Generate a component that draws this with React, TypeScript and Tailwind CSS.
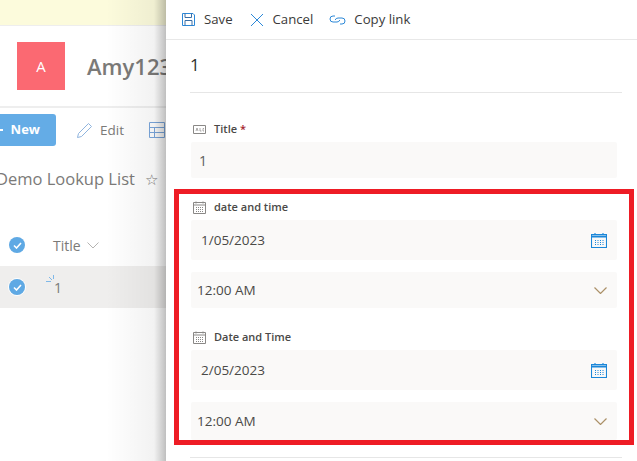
const font = "font-['Open_Sans',sans-serif]";

const SaveIcon = () => (
  <svg width="15" height="15" viewBox="0 0 15 15" fill="none" stroke="#2b88d8" strokeWidth="1">
    <path d="M1.500 1.500h10.500l1.500 1.500v10.500h-12z" />
    <path d="M4 1.500v4h6.500v-4M4 13.500v-5h7v5" stroke="#3a6ea5" />
  </svg>
);

const CancelIcon = () => (
  <svg width="14" height="14" viewBox="0 0 14 14" fill="none" stroke="#2b88d8" strokeWidth="1">
    <path d="M1 1l12 12M13 1L1 13" />
  </svg>
);

const LinkIcon = () => (
  <svg width="17" height="12" viewBox="0 0 17 12" fill="none" stroke="#2b88d8" strokeWidth="1">
    <path d="M6 2H4a3 3 0 0 0 0 6h4a3 3 0 0 0 2.800-2" />
    <path d="M11 10h2a3 3 0 0 0 0-6H9a3 3 0 0 0-2.800 2" />
  </svg>
);

const FieldCalendar = () => (
  <svg width="13" height="13" viewBox="0 0 13 13" fill="none" stroke="#8a8886" strokeWidth="1">
    <path d="M.5 1.500h12v11H.5zM.5 4h12M3 .5v2M10 .5v2" />
    <path d="M3 6.500h7M3 8.500h7M3 10.500h7" strokeDasharray="1 1" />
  </svg>
);

const BlueCalendar = () => (
  <svg width="16" height="15" viewBox="0 0 16 15" fill="none" stroke="#1b87d9" strokeWidth="1.100">
    <path d="M.5 1.500h15v13H.5z" />
    <path d="M.5 3.500h15" strokeWidth="2" />
    <path d="M4 0v2M12 0v2" />
    <path d="M4 7.500h9M4 9.500h9M4 11.500h9" strokeDasharray="1 1.500" />
  </svg>
);

const Chevron = () => (
  <svg width="13" height="7" viewBox="0 0 13 7" fill="none" stroke="#ab9168" strokeWidth="1.200">
    <path d="M.5.500l6 6 6-6" />
  </svg>
);

const CheckCircle = () => (
  <div className="flex h-[16px] w-[16px] items-center justify-center rounded-full bg-[#5fa9e4]">
    <svg width="9" height="7" viewBox="0 0 9 7" fill="none" stroke="#ffffff" strokeWidth="1.600">
      <path d="M1 3.500l2.500 2.500L8 1" />
    </svg>
  </div>
);

const DateFields = ({ label, date, timeHeight }: { label: string; date: string; timeHeight: string }) => (
  <div className="mt-[16px]">
    <div className="flex h-[26px] items-center gap-[8px] pl-[2px] text-[11px] font-semibold text-[#4a4947]">
      <FieldCalendar />
      <span>{label}</span>
    </div>
    <div className="flex h-[40px] items-center justify-between rounded-[2px] bg-[#faf9f8] pl-[10px] pr-[10px] text-[13.500px] text-[#4a4947]">
      <span>{date}</span>
      <BlueCalendar />
    </div>
    <div className={`mt-[12px] flex ${timeHeight} items-center justify-between rounded-[2px] bg-[#faf9f8] pl-[6px] pr-[10px] text-[13.500px] text-[#4a4947]`}>
      <span>12:00 AM</span>
      <Chevron />
    </div>
  </div>
);

const ListSide = () => (
  <div className="relative h-full w-[166px] shrink-0 overflow-hidden bg-white text-[#7b7a78]">
    <div className="h-[25px] bg-[#fcfbdc]" />
    <div className="flex h-[81px] items-center gap-[22px] border-t border-[#eeeeee] pl-[17px]">
      <div className="flex h-[48px] w-[48px] shrink-0 items-center justify-center bg-[#fb6972] text-[15px] text-white">A</div>
      <span className="whitespace-nowrap text-[22px] font-semibold">Amy123</span>
    </div>
    <div className="flex h-[46px] items-center border-t-2 border-[#eeeeee]">
      <div className="-ml-[4px] flex h-[32px] w-[60px] items-center justify-between rounded-[3px] bg-[#64ace6] pr-[16px] pl-[4px] text-[13px] font-bold text-white">
        <span className="h-[2px] w-[3px] bg-white" />
        <span>New</span>
      </div>
      <svg className="ml-[20px]" width="17" height="17" viewBox="0 0 17 17" fill="none" stroke="#8fb4de" strokeWidth="1">
        <path d="M1.500 15.500l1-4L12.500 1.500l3 3-10 10z" />
      </svg>
      <span className="ml-[7px] text-[13.500px]">Edit</span>
      <svg className="ml-[25px]" width="16" height="16" viewBox="0 0 16 16" fill="none" stroke="#7ba7dc" strokeWidth="1">
        <path d="M.5.500h15v15H.5zM.5 5.500h15M.5 10.500h15M5.500 5.500v10" />
      </svg>
    </div>
    <div className="-ml-[4px] flex h-[64px] items-center gap-[10px] whitespace-nowrap pb-[10px] text-[16.500px] font-medium">
      <span>Demo Lookup List</span>
      <span className="text-[15px] font-normal">☆</span>
    </div>
    <div className="flex h-[50px] items-center pt-[8px] pl-[9px] text-[14px]">
      <CheckCircle />
      <span className="ml-[28px]">Title</span>
      <svg className="ml-[6px]" width="12" height="7" viewBox="0 0 12 7" fill="none" stroke="#b5b4b2" strokeWidth="1">
        <path d="M.5.500l5.500 5.500 5.500-5.500" />
      </svg>
    </div>
    <div className="relative flex h-[42px] items-center bg-[#efeeed] pl-[8px] text-[14px]">
      <div className="rounded-full border border-white">
        <CheckCircle />
      </div>
      <span className="ml-[28px]">1</span>
      <svg className="absolute left-[46px] top-[9px]" width="9" height="9" viewBox="0 0 9 9" fill="none" stroke="#7fb8e8" strokeWidth="1">
        <path d="M7.500 0v4M3 2l3 3M0 6.500h5" />
      </svg>
    </div>
    <div className="absolute inset-y-0 right-0 w-[60px] bg-gradient-to-r from-transparent via-[#0000000d] via-80% to-[#00000040]" />
  </div>
);

export default function App() {
  return (
    <div className={`relative flex h-[461px] w-[637px] overflow-hidden bg-white ${font}`}>
      <ListSide />
      <div className="flex min-w-0 flex-1 flex-col">
        <div className="flex h-[40px] shrink-0 items-center border-b border-[#e8e8e8] pl-[15px] text-[13.200px] text-[#3b3a39]">
          <SaveIcon />
          <span className="ml-[8px]">Save</span>
          <span className="ml-[17px] flex"><CancelIcon /></span>
          <span className="ml-[9px]">Cancel</span>
          <span className="ml-[16px] flex"><LinkIcon /></span>
          <span className="ml-[8px]">Copy link</span>
        </div>
        <div className="ml-[24px] mr-[15px] flex h-[53px] shrink-0 items-center border-b border-[#e6e6e6] pb-[3px] text-[17px] font-medium text-[#323130]">1</div>
        <div className="ml-[25px] mr-[20px]">
          <div className="mt-[23px] flex h-[26px] items-center gap-[8px] pl-[2px] text-[11px] font-semibold text-[#4a4947]">
            <svg width="13" height="9" viewBox="0 0 13 9" fill="none" stroke="#8a8886" strokeWidth="1">
              <path d="M.5.500h12v8H.5z" />
              <path d="M3 6l1-3 1 3M7 3v3h1.500M11 3.500h-1v2.500h1" strokeWidth=".7" />
            </svg>
            <span>Title <span className="text-[#a4262c]">*</span></span>
          </div>
          <div className="flex h-[36px] items-center rounded-[2px] bg-[#faf9f8] pl-[8px] text-[14px] text-[#605e5c]">1</div>
          <DateFields label="date and time" date="1/05/2023" timeHeight="h-[36px]" />
          <DateFields label="Date and Time" date="2/05/2023" timeHeight="h-[38px]" />
        </div>
        <div className="ml-[24px] mr-[15px] mt-[17px] border-t border-[#e6e6e6]" />
      </div>
      <div className="absolute left-[174px] top-[189px] h-[256px] w-[460px] border-[5px] border-[#ee1c25]" />
    </div>
  );
}
